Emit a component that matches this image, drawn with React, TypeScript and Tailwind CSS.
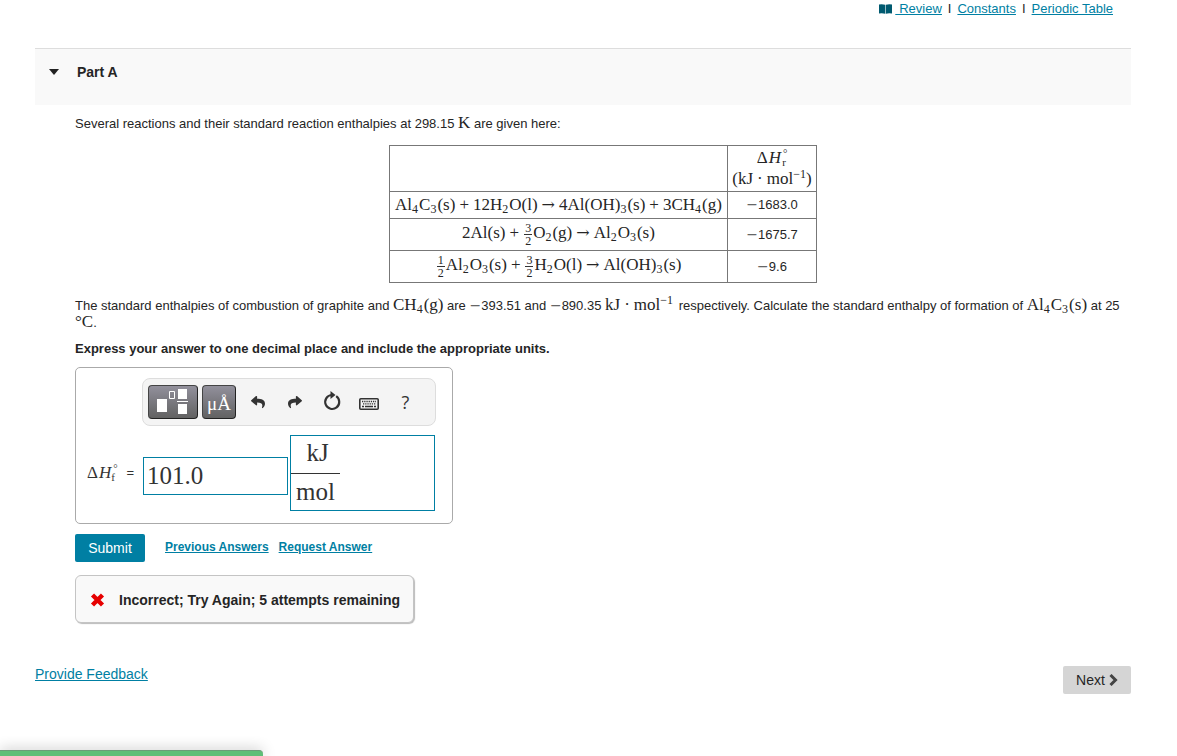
import { useState, type ReactNode } from "react";
import clsx from "clsx";
import { FaReply, FaShare } from "react-icons/fa";

const linkClass = "text-[#007fa3] underline";

function Tex({ children, className }: { children: ReactNode; className?: string }) {
  return (
    <span className={clsx("font-['Liberation_Serif',serif] text-[17px] leading-4 whitespace-nowrap [&_sub]:mr-px [&_sub]:text-xs [&_sup]:text-xs", className)}>
      {children}
    </span>
  );
}

function Op({ children }: { children: ReactNode }) {
  return <span className="mx-1">{children}</span>;
}

function Arrow() {
  return <span className="mx-1 font-['DejaVu_Serif',serif] text-base leading-4">→</span>;
}

function Minus() {
  return <span className="font-['DejaVu_Serif',serif] text-sm leading-3 font-normal text-[#666]">−</span>;
}

function Frac({ top, bottom }: { top: string; bottom: string }) {
  return (
    <span className="mx-px inline-flex flex-col items-center align-middle text-xs leading-3">
      <span className="border-b border-[#333] px-px">{top}</span>
      <span>{bottom}</span>
    </span>
  );
}

// standard enthalpy symbol with the degree sign stacked over its subscript
function DeltaH({ kind }: { kind: string }) {
  return (
    <Tex className="inline-flex items-center">
      <span>Δ</span>
      <i className="ml-px">H</i>
      <span className="flex flex-col text-[11px] leading-[9px]">
        <span className="pl-0.5">°</span>
        <span>{kind}</span>
      </span>
    </Tex>
  );
}

const Al4C3 = () => <>Al<sub>4</sub>C<sub>3</sub>(s)</>;
const Al2O3 = () => <>Al<sub>2</sub>O<sub>3</sub>(s)</>;
const AlOH3 = () => <>Al(OH)<sub>3</sub>(s)</>;
const KjPerMol = () => <>kJ<Op>·</Op>mol<sup>−1</sup></>;

const reactions = [
  {
    id: "carbide",
    height: "h-[27px]",
    value: "1683.0",
    equation: (
      <>
        <Al4C3 /><Op>+</Op>12H<sub>2</sub>O(l)<Arrow />4<AlOH3 /><Op>+</Op>3CH<sub>4</sub>(g)
      </>
    ),
  },
  {
    id: "oxide",
    height: "h-8",
    value: "1675.7",
    equation: (
      <>
        2Al(s)<Op>+</Op><Frac top="3" bottom="2" />O<sub>2</sub>(g)<Arrow /><Al2O3 />
      </>
    ),
  },
  {
    id: "hydroxide",
    height: "h-8",
    value: "9.6",
    equation: (
      <>
        <Frac top="1" bottom="2" /><Al2O3 /><Op>+</Op><Frac top="3" bottom="2" />H<sub>2</sub>O(l)<Arrow /><AlOH3 />
      </>
    ),
  },
];

function BookIcon() {
  return (
    <svg viewBox="0 0 13 10" className="h-2.5 w-[13px]" aria-hidden="true">
      <path d="M0 .5Q3.500 0 6.200 .8V9.700Q3.500 9 0 9.500ZM13 .5Q9.500 0 6.800 .8V9.700Q9.500 9 13 9.500Z" fill="#005a70" />
    </svg>
  );
}

function TemplatesIcon() {
  return (
    <svg viewBox="0 0 32 26" width="32" height="26" aria-hidden="true">
      <path d="M0 10h10v13H0zM21 0h9v10h-9zM20 12h11v1H20zM21 15h9v10h-9z" fill="#fff" />
      <path d="M12.500 2.500h5v7h-5z" fill="none" stroke="#fff" />
    </svg>
  );
}

function ResetIcon() {
  return (
    <svg viewBox="0 0 18 20" width="18" height="20" fill="none" aria-hidden="true">
      <path d="M13.200 5.200A7 7 0 1 1 8.500 4" stroke="#333" strokeWidth="2.200" />
      <path d="M7.500 0l5 4-5 4z" fill="#333" />
    </svg>
  );
}

function KeyboardIcon() {
  return (
    <svg viewBox="0 0 20 12" width="20" height="12" fill="none" aria-hidden="true">
      <rect x=".8" y=".8" width="18.400" height="10.400" rx="1" stroke="#333" strokeWidth="1.600" />
      <path d="M3 3.500h14M4 5.800h13" stroke="#333" strokeWidth="1.300" strokeDasharray="1.300 .9" />
      <path d="M3 8.500h2M6 8.500h8M15 8.500h2" stroke="#333" strokeWidth="1.500" />
    </svg>
  );
}

function Toolbar() {
  const dark =
    "flex h-[34px] items-center justify-center rounded border border-[#444] border-r-[#222] border-b-[#222] bg-linear-to-b from-[#92909c] to-[#626262] text-white";
  const plain = "flex h-8 w-[37px] items-center justify-center text-[#333]";

  return (
    <div className="ml-[66px] flex h-12 w-[294px] items-center rounded-lg border border-[#ddd] bg-[#f4f4f4] pl-[5px]">
      <button type="button" aria-label="Templates" className={clsx(dark, "w-[50px]")}>
        <TemplatesIcon />
      </button>
      <button type="button" aria-label="Symbols" className={clsx(dark, "ml-1 w-[34px] pt-1 font-['Liberation_Serif',serif] text-[19px]")}>
        μÅ
      </button>
      <div className="ml-[3px] flex">
        <button type="button" aria-label="Undo" className={plain}><FaReply size={14} /></button>
        <button type="button" aria-label="Redo" className={plain}><FaShare size={14} /></button>
        <button type="button" aria-label="Reset" className={clsx(plain, "pb-0.5")}><ResetIcon /></button>
        <button type="button" aria-label="Keyboard shortcuts" className={clsx(plain, "pt-1")}><KeyboardIcon /></button>
        <button type="button" aria-label="Help" className={clsx(plain, "font-['Open_Sans',sans-serif] text-lg")}>?</button>
      </div>
    </div>
  );
}

function AnswerBox() {
  const [value, setValue] = useState("101.0");
  const [numerator, setNumerator] = useState("kJ");
  const [denominator, setDenominator] = useState("mol");

  return (
    <div className="mt-2.5 w-[378px] max-w-full rounded-[5px] border border-[#aaa] pt-2.5 pb-3">
      <Toolbar />
      <div className="mt-[9px] flex items-center font-['Liberation_Serif',serif] text-[25px] text-[#333]">
        <label htmlFor="answer" className="flex w-[67px] items-center justify-between pr-[9px] pl-[11px] font-['Liberation_Sans',sans-serif] text-[13px]">
          <DeltaH kind="f" /> =
        </label>
        <input
          id="answer"
          value={value}
          onChange={(e) => setValue(e.target.value)}
          className="mt-1.5 h-[38px] w-[145px] border border-[#007fa3] px-[3px]"
        />
        <div className="ml-0.5 h-[76px] w-[145px] border border-[#007fa3]">
          <div className="flex w-[49px] flex-col">
            <input
              aria-label="Unit numerator"
              value={numerator}
              onChange={(e) => setNumerator(e.target.value)}
              className="h-[38px] border-b border-[#333] pb-1 pl-1 text-center"
            />
            <input
              aria-label="Unit denominator"
              value={denominator}
              onChange={(e) => setDenominator(e.target.value)}
              className="h-9 text-center"
            />
          </div>
        </div>
      </div>
    </div>
  );
}

export default function App() {
  const [open, setOpen] = useState(true);

  return (
    <div className="bg-white pr-[46px] pl-[35px] font-['Liberation_Sans',Arial,sans-serif] text-[13px] leading-4 text-[#252525]">
      <nav className="flex h-12 items-start justify-end gap-1.5 pt-px pr-[18px]">
        <a href="#review" className={clsx(linkClass, "flex items-center gap-1")}>
          <BookIcon />
          <span className="whitespace-pre underline"> Review</span>
        </a>
        <span>I</span>
        <a href="#constants" className={linkClass}>Constants</a>
        <span>I</span>
        <a href="#periodic" className={linkClass}>Periodic Table</a>
      </nav>

      <header className="h-[57px] border-t border-[#ddd] bg-[#f9f9f9] pt-[15px] pl-3.5">
        <button type="button" aria-expanded={open} onClick={() => setOpen(!open)} className="flex items-center gap-[18px] text-sm leading-4 font-bold">
          <svg viewBox="0 0 10 6" className="h-1.5 w-2.5" aria-hidden="true">
            <path d="M0 0h10L5 6z" fill="#222" />
          </svg>
          Part A
        </button>
      </header>

      {open && (
        <main className="pt-2.5 pl-10">
          <p>
            Several reactions and their standard reaction enthalpies at 298.15 <Tex>K</Tex> are given here:
          </p>

          <table className="mx-auto mt-[13px] border-collapse text-center">
            <thead>
              <tr className="h-[46px]">
                <th className="w-[338px] border border-[#777]" aria-label="Reaction" />
                <th className="w-[89px] border border-[#777] font-normal">
                  <div className="flex h-[18px] items-center justify-center"><DeltaH kind="r" /></div>
                  <div className="h-[22px] pt-1"><Tex className="text-base">(<KjPerMol />)</Tex></div>
                </th>
              </tr>
            </thead>
            <tbody>
              {reactions.map((r) => (
                <tr key={r.id} className={r.height}>
                  <td className="border border-[#777]"><Tex>{r.equation}</Tex></td>
                  <td className="border border-[#777]"><Minus />{r.value}</td>
                </tr>
              ))}
            </tbody>
          </table>

          <p className="mt-3.5">
            The standard enthalpies of combustion of graphite and <Tex>CH<sub>4</sub>(g)</Tex> are <Minus />393.51 and <Minus />890.35{" "}
            <Tex><KjPerMol /></Tex>{" "}<span className="ml-0.5">respectively.</span> Calculate the standard enthalpy of formation of{" "}
            <Tex><Al4C3 /></Tex> at 25 <Tex>°C</Tex>.
          </p>
          <p className="mt-2.5 font-bold">
            Express your answer to one decimal place and include the appropriate units.
          </p>

          <AnswerBox />

          <div className="mt-2.5 flex items-center text-xs font-bold">
            <button type="button" className="h-7 w-[70px] rounded-xs bg-[#007fa3] text-sm font-normal text-white">
              Submit
            </button>
            <div className="flex gap-2.5 pb-0.5 pl-5">
              <a href="#previous" className={linkClass}>Previous Answers</a>
              <a href="#request" className={linkClass}>Request Answer</a>
            </div>
          </div>

          <div role="status" className="mt-[13px] flex h-12 w-[339px] items-center gap-3.5 rounded-md border border-[#c4c4c4] bg-[#f9f9f9] pt-0.5 pl-3.5 text-sm font-bold shadow-[1px_1px_1px_#bbb]">
            <svg viewBox="0 0 14 14" width="15" height="14" aria-hidden="true">
              <path d="M2 2l10 10M12 2L2 12" stroke="#e60000" strokeWidth="4.400" />
            </svg>
            Incorrect; Try Again; 5 attempts remaining
          </div>
        </main>
      )}

      <footer className="mt-[43px] flex items-start justify-between text-sm leading-4">
        <a href="#feedback" className={linkClass}>Provide Feedback</a>
        <button type="button" className="flex h-7 w-[68px] items-center justify-center gap-1 rounded-xs bg-[#d5d5d5]">
          Next
          <svg viewBox="0 0 9 12" width="9" height="12" fill="none" aria-hidden="true">
            <path d="M1.500 1l5 5-5 5" stroke="#444" strokeWidth="3" />
          </svg>
        </button>
      </footer>

      <div className="fixed bottom-0 left-0 h-1.5 w-[263px] rounded-tr border-t border-[#6b9c78] bg-[#5fbf77] shadow-[0_0_14px_rgba(0,0,0,0.3)]" />
    </div>
  );
}
